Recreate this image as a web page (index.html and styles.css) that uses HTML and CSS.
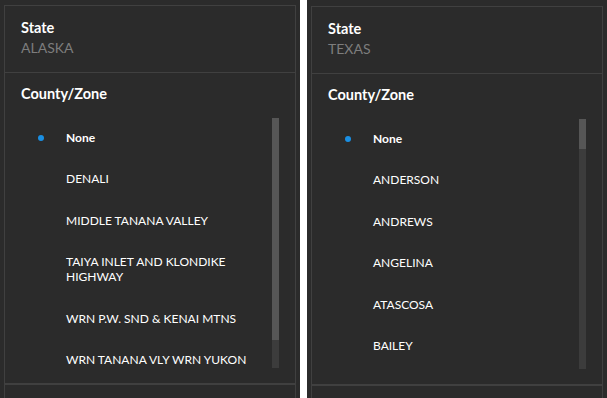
FILE: index.html
```html
<!DOCTYPE html>
<html lang="en">
<head>
<meta charset="utf-8">
<title>County/Zone pickers</title>
<link rel="stylesheet" href="styles.css">
</head>
<body>
<div class="frames">
  <div class="frame">
    <div class="card">
      <section class="field state">
        <div class="label">State</div>
        <div class="value">ALASKA</div>
      </section>
      <section class="field county">
        <div class="label">County/Zone</div>
        <div class="picker">
          <ul class="options">
            <li class="option selected"><span class="dot"></span><span class="text">None</span></li>
            <li class="option"><span class="dot"></span><span class="text">DENALI</span></li>
            <li class="option"><span class="dot"></span><span class="text">MIDDLE TANANA VALLEY</span></li>
            <li class="option"><span class="dot"></span><span class="text">TAIYA INLET AND KLONDIKE HIGHWAY</span></li>
            <li class="option"><span class="dot"></span><span class="text">WRN P.W. SND &amp; KENAI MTNS</span></li>
            <li class="option"><span class="dot"></span><span class="text">WRN TANANA VLY WRN YUKON</span></li>
          </ul>
          <div class="track"><div class="thumb" style="height:222px"></div></div>
        </div>
      </section>
      <section class="field rest"></section>
    </div>
  </div>
  <div class="frame shifted">
    <div class="card">
      <section class="field state">
        <div class="label">State</div>
        <div class="value">TEXAS</div>
      </section>
      <section class="field county">
        <div class="label">County/Zone</div>
        <div class="picker">
          <ul class="options">
            <li class="option selected"><span class="dot"></span><span class="text">None</span></li>
            <li class="option"><span class="dot"></span><span class="text">ANDERSON</span></li>
            <li class="option"><span class="dot"></span><span class="text">ANDREWS</span></li>
            <li class="option"><span class="dot"></span><span class="text">ANGELINA</span></li>
            <li class="option"><span class="dot"></span><span class="text">ATASCOSA</span></li>
            <li class="option"><span class="dot"></span><span class="text">BAILEY</span></li>
          </ul>
          <div class="track"><div class="thumb" style="height:30px"></div></div>
        </div>
      </section>
      <section class="field rest"></section>
    </div>
  </div>
</div>
</body>
</html>
```

FILE: styles.css
```css
html, body {
  margin: 0;
  padding: 0;
  background: #ffffff;
}

body {
  font-family: "Lato", "Open Sans", sans-serif;
  color: #ffffff;
  overflow: hidden;
}

.frames {
  display: flex;
  gap: 7px;
  width: 607px;
  height: 398px;
}

.frame {
  width: 300px;
  height: 398px;
  box-sizing: border-box;
  padding: 5px 4px 0 4px;
  background: #2b2b2b;
  overflow: hidden;
}

.frame.shifted {
  padding-top: 6px;
}

.card {
  border: 1px solid #404040;
  border-bottom: none;
  background: #2b2b2b;
  height: 420px;
}

.field {
  border-bottom: 1px solid #404040;
  padding-left: 16px;
  padding-right: 16px;
}

.field.state {
  padding-top: 12px;
  padding-bottom: 14px;
}

.label {
  font-size: 14.5px;
  line-height: 20px;
  font-weight: 700;
  color: #ffffff;
}

.value {
  font-size: 14px;
  line-height: 20px;
  color: #7d7d7d;
}

.field.county {
  padding-top: 11px;
  padding-bottom: 15px;
}

.picker {
  display: flex;
  margin-top: 14px;
  height: 250px;
}

.options {
  list-style: none;
  margin: 0;
  padding: 0;
  flex: 1;
  overflow: hidden;
}

.option {
  display: flex;
  align-items: flex-start;
  padding: 11.5px 12px 15px 17px;
  font-size: 12px;
  line-height: 15px;
  color: #ffffff;
}

.dot {
  flex: none;
  width: 6px;
  height: 6px;
  margin-top: 5px;
  border-radius: 50%;
  background: transparent;
}

.option.selected .dot {
  background: #1a8fe3;
}

.text {
  margin-left: 22px;
}

.option.selected .text {
  font-weight: 700;
}

.track {
  flex: none;
  width: 7px;
  height: 250px;
  background: #3c3c3c;
}

.thumb {
  width: 7px;
  background: #565656;
}
```
